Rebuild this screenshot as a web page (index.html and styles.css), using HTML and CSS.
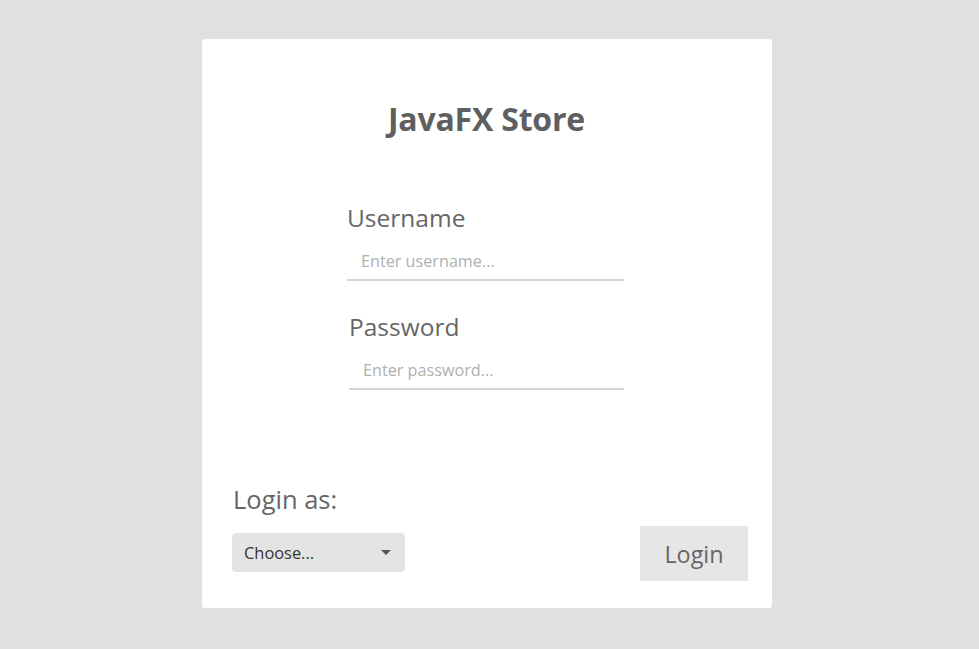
FILE: index.html
```html
<!DOCTYPE html>
<html>
<head>
<meta charset="utf-8">
<link rel="stylesheet" href="styles.css">
</head>
<body>
<div class="card">
  <h1 class="title">JavaFX Store</h1>
  <div class="form">
    <div class="field">
      <label class="label">Username</label>
      <div class="input">Enter username...</div>
    </div>
    <div class="field field-pw">
      <label class="label">Password</label>
      <div class="input">Enter password...</div>
    </div>
  </div>
  <div class="bottom">
    <div class="role">
      <div class="label label-role">Login as:</div>
      <div class="select">
        <span>Choose...</span>
        <span class="arrow"></span>
      </div>
    </div>
    <div class="btn">Login</div>
  </div>
</div>
</body>
</html>
```
FILE: styles.css
```css
html, body {
  margin: 0;
  height: 100%;
}
body {
  background: #e0e0e0;
  font-family: "Open Sans", "Liberation Sans", sans-serif;
  overflow: hidden;
}
.card {
  box-sizing: border-box;
  margin: 39px 0 0 202px;
  width: 570px;
  height: 569px;
  background: #fff;
  border-radius: 3px;
  display: flex;
  flex-direction: column;
  padding: 62px 24px 27px 30px;
}
.title {
  margin: 0;
  padding-right: 7px;
  font-size: 32px;
  line-height: 36px;
  font-weight: 700;
  color: #5f5f5f;
  text-align: center;
  letter-spacing: -0.2px;
}
.form {
  margin-top: 66px;
  margin-left: 115px;
  width: 277px;
  display: flex;
  flex-direction: column;
  gap: 31px;
}
.field-pw {
  margin-left: 2px;
}
.label {
  display: block;
  font-size: 24.5px;
  line-height: 30px;
  color: #666;
  font-weight: 400;
}
.input {
  margin-top: 10px;
  height: 36px;
  line-height: 36px;
  padding-left: 14px;
  font-size: 16.2px;
  color: #b0b0b0;
  border-bottom: 2px solid #d4d4d4;
}
.bottom {
  margin-top: auto;
  display: flex;
  justify-content: space-between;
  align-items: flex-end;
}
.label-role {
  font-size: 25.5px;
  margin-bottom: 19px;
  margin-left: 1px;
}
.select {
  width: 173px;
  height: 39px;
  box-sizing: border-box;
  background: #e4e4e4;
  border-radius: 4px;
  display: flex;
  align-items: center;
  justify-content: space-between;
  padding: 0 14px 0 12px;
  font-size: 16.4px;
  color: #333;
  margin-bottom: 9px;
}
.arrow {
  width: 0;
  height: 0;
  border-left: 5px solid transparent;
  border-right: 5px solid transparent;
  border-top: 5px solid #555;
}
.btn {
  width: 108px;
  height: 55px;
  background: #e6e6e6;
  color: #666;
  font-size: 23.4px;
  display: flex;
  align-items: center;
  justify-content: center;
}
```
